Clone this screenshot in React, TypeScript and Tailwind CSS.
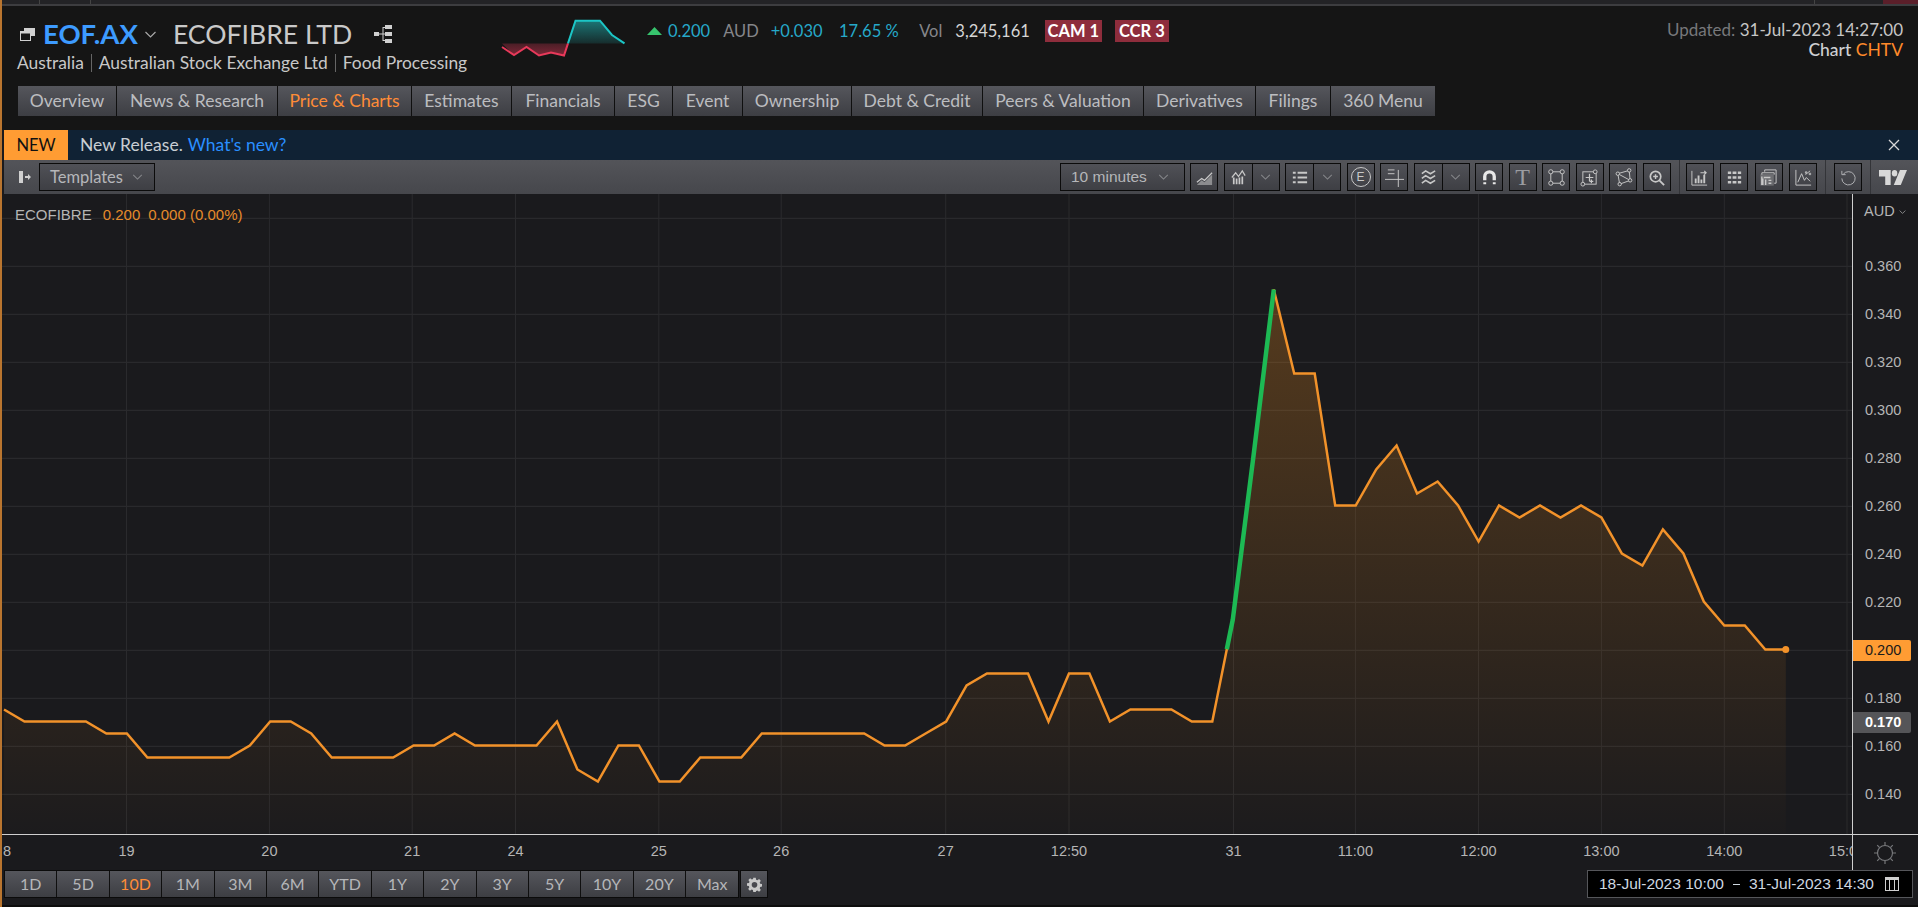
import React from "react";

const FONT = "font-['Lato','Open_Sans',sans-serif]";

const prices = [
  0.175, 0.17, 0.17, 0.17, 0.17, 0.165, 0.165, 0.155, 0.155, 0.155, 0.155, 0.155, 0.16, 0.17, 0.17, 0.165, 0.155,
  0.155, 0.155, 0.155, 0.16, 0.16, 0.165, 0.16, 0.16, 0.16, 0.16, 0.17, 0.15, 0.145, 0.16, 0.16, 0.145, 0.145, 0.155,
  0.155, 0.155, 0.165, 0.165, 0.165, 0.165, 0.165, 0.165, 0.16, 0.16, 0.165, 0.17, 0.185, 0.19, 0.19, 0.19, 0.17, 0.19,
  0.19, 0.17, 0.175, 0.175, 0.175, 0.17, 0.17, 0.2125, 0.28, 0.35, 0.315, 0.315, 0.26, 0.26, 0.275, 0.285, 0.265, 0.27,
  0.26, 0.245, 0.26, 0.255, 0.26, 0.255, 0.26, 0.255, 0.24, 0.235, 0.25, 0.24, 0.22, 0.21, 0.21, 0.2, 0.2,
];

const px = (i: number) => 4 + 20.48 * i;
const py = (p: number) => 650.3 - (p - 0.2) * 2400;
const pts = prices.map((p, i) => `${px(i).toFixed(1)},${py(p).toFixed(1)}`).join(" ");
const greenPts = `1226.8,650 ${prices.slice(60, 63).map((p, i) => `${px(60 + i).toFixed(1)},${py(p).toFixed(1)}`).join(" ")}`;

const gridY = [0.14, 0.16, 0.18, 0.2, 0.22, 0.24, 0.26, 0.28, 0.3, 0.32, 0.34, 0.36, 0.38];
const gridX = [126.5, 269.4, 412.2, 515.5, 658.8, 781.2, 945.7, 1069, 1233.5, 1355.4, 1478.5, 1601.4, 1724.3, 1847];
const timeLabels: Array<[string, number]> = [
  ["8", 7],
  ["19", 126.5],
  ["20", 269.4],
  ["21", 412.2],
  ["24", 515.5],
  ["25", 658.8],
  ["26", 781.2],
  ["27", 945.7],
  ["12:50", 1069],
  ["31", 1233.5],
  ["11:00", 1355.4],
  ["12:00", 1478.5],
  ["13:00", 1601.4],
  ["14:00", 1724.3],
  ["15:00", 1847],
];
const axisLabels = ["0.360", "0.340", "0.320", "0.300", "0.280", "0.260", "0.240", "0.220", "0.180", "0.160", "0.140"];

const tabs = [
  { name: "Overview", w: "w-[99px]" },
  { name: "News & Research", w: "w-[161px]" },
  { name: "Price & Charts", w: "w-[134px]", on: true },
  { name: "Estimates", w: "w-[100px]" },
  { name: "Financials", w: "w-[103px]" },
  { name: "ESG", w: "w-[58px]" },
  { name: "Event", w: "w-[70px]" },
  { name: "Ownership", w: "w-[109px]" },
  { name: "Debt & Credit", w: "w-[131px]" },
  { name: "Peers & Valuation", w: "w-[161px]" },
  { name: "Derivatives", w: "w-[112px]" },
  { name: "Filings", w: "w-[75px]" },
  { name: "360 Menu", w: "w-[104px]" },
];

const ranges = ["1D", "5D", "10D", "1M", "3M", "6M", "YTD", "1Y", "2Y", "3Y", "5Y", "10Y", "20Y", "Max"];

const Chevron: React.FC<{ className?: string }> = ({ className }) => (
  <svg viewBox="0 0 12 7" className={className} fill="none" stroke="currentColor" strokeWidth="1.2">
    <polyline points="1,1 6,6 11,1" />
  </svg>
);

const Btn: React.FC<{ children: React.ReactNode }> = ({ children }) => (
  <div className="flex h-[28px] w-[28px] items-center justify-center border border-[#0b0b0b] bg-gradient-to-b from-[#505157] to-[#3e3f44] text-[#c8c8c8]">
    {children}
  </div>
);

const DoubleBtn: React.FC<{ children: React.ReactNode }> = ({ children }) => (
  <div className="flex h-[28px] w-[56px] border border-[#0b0b0b] bg-gradient-to-b from-[#505157] to-[#3e3f44] text-[#c8c8c8]">
    <div className="flex w-[28px] items-center justify-center border-r border-[#0b0b0b]">{children}</div>
    <div className="flex flex-1 items-center justify-center text-[#85868a]">
      <Chevron className="h-[6px] w-[11px]" />
    </div>
  </div>
);

const Ico: React.FC<{ children: React.ReactNode }> = ({ children }) => (
  <svg viewBox="0 0 20 20" className="h-[19px] w-[19px]" fill="none" stroke="currentColor" strokeWidth="1">
    {children}
  </svg>
);

const Tab: React.FC<{ name: string; w: string; on?: boolean }> = ({ name, w, on }) => (
  <div
    className={`flex h-[30px] items-center justify-center border-r border-[#0f0f0f] bg-gradient-to-b from-[#55565c] to-[#3d3e43] text-[17.500px] last:border-r-0 ${w} ${
      on ? "text-[#ff8c37]" : "text-[#bcbdc0]"
    }`}
  >
    {name}
  </div>
);

const App: React.FC = () => {
  return (
    <div className={`flex h-[907px] w-[1918px] flex-col overflow-hidden border-l-2 border-[#b9752f] bg-[#1a1a1d] ${FONT}`}>
      <div className="flex h-[4px] justify-between bg-[#232326]">
        <div className="ml-[37px] h-full w-[52px] border-x border-[#444]" />
        <div className="flex h-full w-[104px] justify-end border-l border-[#444]">
          <div className="h-full w-[35px] bg-[#5b1f2a]" />
        </div>
      </div>
      <div className="h-[2px] bg-[#3d3d40]" />

      {/* header */}
      <div className="flex h-[124px] flex-col bg-[#151515]">
        <div className="flex h-[80px] justify-between">
          <div className="flex flex-col">
            <div className="mt-[9px] flex h-[38px] items-start">
              <div className="flex h-[38px] w-[499px] items-center pl-[18px]">
                <svg viewBox="0 0 15 13" className="h-[13px] w-[15px]">
                  <rect x="4" y="0" width="11" height="8" fill="#d0d0d0" />
                  <rect x="0.5" y="3.5" width="10" height="9" fill="#151515" stroke="#d0d0d0" />
                  <rect x="0" y="3" width="11" height="2.5" fill="#d0d0d0" />
                </svg>
                <span className="ml-[8px] text-[27.500px] font-bold leading-none text-[#3d9bff]">EOF.AX</span>
                <Chevron className="ml-[6px] h-[7px] w-[13px] text-[#a8a8a8]" />
                <span className="ml-[16px] text-[26.600px] leading-none text-[#c9c9c9]">ECOFIBRE LTD</span>
                <svg viewBox="0 0 18 18" className="ml-[22px] h-[18px] w-[18px]" fill="#d0d0d0">
                  <rect x="0" y="7" width="5" height="4" />
                  <rect x="11" y="0" width="7" height="4" />
                  <rect x="11" y="7" width="7" height="4" />
                  <rect x="11" y="14" width="7" height="4" />
                  <path d="M5 8.5h3.5V2H11v1H9.5v5.5H11v1H9.5V15H11v1H8.500V9.500H5z" />
                </svg>
              </div>
              <svg viewBox="501 15 124 44" className="h-[44px] w-[124px] overflow-visible">
                <defs>
                  <linearGradient id="teal" x1="0" y1="0" x2="0" y2="1">
                    <stop offset="0" stopColor="#1fb5b5" stopOpacity="0.6" />
                    <stop offset="1" stopColor="#1fb5b5" stopOpacity="0.15" />
                  </linearGradient>
                  <linearGradient id="red" x1="0" y1="0" x2="0" y2="1">
                    <stop offset="0" stopColor="#e8395a" stopOpacity="0.25" />
                    <stop offset="1" stopColor="#e8395a" stopOpacity="0.5" />
                  </linearGradient>
                </defs>
                <polygon points="502,43.400 514,55 526.500,47 539,55.500 551,52.500 564,55.500 568,43.400" fill="url(#red)" />
                <polygon points="568,43.400 575.500,20.700 600,20.700 612,35 624.500,43.400" fill="url(#teal)" />
                <polyline points="502,47 514,55 526.500,47 539,55.500 551,52.500 564,55.500 568,43.400" fill="none" stroke="#e8395a" strokeWidth="2" />
                <polyline points="568,43.400 575.500,20.700 600,20.700 612,35 624.500,43.400" fill="none" stroke="#1cc6c6" strokeWidth="2" />
              </svg>
              <div className="ml-[22px] flex h-[32px] items-center text-[16.500px] leading-none">
                <svg viewBox="0 0 15 8" className="h-[8px] w-[15px]" fill="#37c46d">
                  <polygon points="7.500,0 15,8 0,8" />
                </svg>
                <span className="ml-[6px] text-[#26a9c9]">0.200</span>
                <span className="ml-[13px] text-[#85868a]">AUD</span>
                <span className="ml-[12px] text-[#26a9c9]">+0.030</span>
                <span className="ml-[16.500px] text-[#26a9c9]">17.65 %</span>
                <span className="ml-[20.500px] text-[#85868a]">Vol</span>
                <span className="ml-[13px] text-[#d6d6d6]">3,245,161</span>
                <span className="ml-[15px] flex h-[22px] w-[57px] items-center justify-center bg-[#8e2d3c] font-bold text-white">CAM 1</span>
                <span className="ml-[13px] flex h-[22px] w-[54px] items-center justify-center bg-[#8e2d3c] font-bold text-white">CCR 3</span>
              </div>
            </div>
            <div className="flex items-center pl-[15px] text-[17.400px] leading-[20px] text-[#c8c8c8]">
              <span>Australia</span>
              <span className="mx-[7px] h-[18px] w-px bg-[#666]" />
              <span>Australian Stock Exchange Ltd</span>
              <span className="mx-[7px] h-[18px] w-px bg-[#666]" />
              <span>Food Processing</span>
            </div>
          </div>
          <div className="flex flex-col items-end pr-[15px] pt-[14px] leading-[20px]">
            <div className="text-[17px]">
              <span className="text-[#77787b]">Updated: </span>
              <span className="text-[#c6c6c6]">31-Jul-2023 14:27:00</span>
            </div>
            <div className="text-[17.500px]">
              <span className="font-medium text-[#cfd0d2]">Chart </span>
              <span className="text-[#ff8a2a]">CHTV</span>
            </div>
          </div>
        </div>
        <div className="ml-[16px] flex h-[30px] self-start border-y-0">
          {tabs.map((t) => (
            <Tab key={t.name} name={t.name} w={t.w} on={t.on} />
          ))}
        </div>
      </div>

      {/* release notice */}
      <div className="ml-[2px] flex h-[30px] items-center bg-[#102234] text-[17.500px]">
        <div className="flex h-full w-[64px] items-center justify-center bg-[#ff9c33] text-[16.500px] text-[#111]">NEW</div>
        <span className="ml-[12px] text-[#c9ced3]">New Release.</span>
        <span className="ml-[5px] text-[#2a8fff]">What's new?</span>
        <svg viewBox="0 0 12 12" className="ml-auto mr-[18px] h-[12px] w-[12px]" stroke="#d8d8d8" strokeWidth="1.300">
          <path d="M1 1l10 10M11 1L1 11" />
        </svg>
      </div>

      {/* toolbar */}
      <div className="ml-[2px] flex h-[34px] items-center bg-gradient-to-b from-[#535459] to-[#46474c]">
        <svg viewBox="0 0 12 12" className="ml-[15px] h-[12px] w-[12px]" fill="#d0d0d0">
          <rect x="0" y="0" width="4" height="12" />
          <path d="M6 5h3V3l3 3-3 3V7H6z" />
        </svg>
        <div className="ml-[8px] flex h-[28px] w-[116px] items-center border border-[#0b0b0b] bg-gradient-to-b from-[#505157] to-[#3e3f44] pl-[10px] text-[16.500px] text-[#b5b6b9]">
          Templates
          <Chevron className="ml-[9px] h-[6px] w-[11px] text-[#85868a]" />
        </div>
        <div className="ml-auto flex h-[28px] w-[125px] items-center border border-[#0b0b0b] bg-gradient-to-b from-[#505157] to-[#3e3f44] pl-[10px] font-['Liberation_Sans',sans-serif] text-[15.500px] text-[#b5b6b9]">
          10 minutes
          <Chevron className="ml-[11px] h-[6px] w-[11px] text-[#85868a]" />
        </div>
        <div className="ml-[5px] flex items-center gap-[5.500px]">
          <Btn>
            <Ico>
              <polyline points="2,15 7,11 10,13 18,5" strokeWidth="1.300" />
              <polygon points="2,18 7,13 10,15 18,7 18,18" fill="currentColor" stroke="none" opacity="0.55" />
            </Ico>
          </Btn>
          <DoubleBtn>
            <Ico>
              <polyline points="3,10 7,5 10,9 14,3 17,8" strokeWidth="1.300" />
              <path d="M5 10v7M8 11v6M11 10v7M14 9v8" strokeWidth="1.800" />
            </Ico>
          </DoubleBtn>
          <DoubleBtn>
            <Ico>
              <path d="M3 5h3M8 5h10M3 10h3M8 10h10M3 15h3M8 15h10" strokeWidth="2" />
            </Ico>
          </DoubleBtn>
          <Btn>
            <div className="flex h-[20px] w-[20px] items-center justify-center rounded-full border border-[#c8c8c8] font-['Liberation_Sans',sans-serif] text-[12px] leading-none">
              E
            </div>
          </Btn>
          <Btn>
            <Ico>
              <path d="M3 2h7M3 6h7M0 12h20M14 2v18" />
            </Ico>
          </Btn>
          <DoubleBtn>
            <Ico>
              <path d="M3 6l4-3 5 3 5-3M3 11l4-3 5 3 5-3M3 16l4-3 5 3 5-3" strokeWidth="1.700" />
            </Ico>
          </DoubleBtn>
          <Btn>
            <Ico>
              <path d="M5 13V9a5 5 0 0 1 10 0v4" strokeWidth="3.500" stroke="#e8e8e8" />
              <path d="M3.500 16h3M13.500 16h3" strokeWidth="2" stroke="#e8e8e8" />
            </Ico>
          </Btn>
          <Btn>
            <span className="font-['Liberation_Serif',serif] text-[24px] leading-none text-[#9c9da1]">T</span>
          </Btn>
          <Btn>
            <Ico>
              <rect x="4" y="4" width="12" height="12" />
              <circle cx="4" cy="4" r="2.200" fill="#46474c" />
              <circle cx="16" cy="4" r="2.200" fill="#46474c" />
              <circle cx="4" cy="16" r="2.200" fill="#46474c" />
              <circle cx="16" cy="16" r="2.200" fill="#46474c" />
            </Ico>
          </Btn>
          <Btn>
            <Ico>
              <rect x="3" y="4" width="14" height="13" />
              <path d="M10 6v8M6 10h8M12 12v4M10 14h4" strokeWidth="1.300" />
              <circle cx="16" cy="4" r="2" fill="#46474c" />
              <circle cx="3" cy="17" r="2" fill="#46474c" />
            </Ico>
          </Btn>
          <Btn>
            <Ico>
              <polygon points="4,6 16,2.500 17,13 6,17" />
              <path d="M4 6L17 13" />
              <circle cx="4" cy="6" r="1.800" fill="#46474c" />
              <circle cx="16" cy="2.500" r="1.800" fill="#46474c" />
              <circle cx="17" cy="13" r="1.800" fill="#46474c" />
              <circle cx="6" cy="17" r="1.800" fill="#46474c" />
            </Ico>
          </Btn>
          <Btn>
            <Ico>
              <circle cx="9" cy="9" r="5.500" strokeWidth="1.800" />
              <path d="M13 13l5 5" strokeWidth="2" />
              <path d="M9 6.500v5M6.500 9h5" strokeWidth="1.500" />
            </Ico>
          </Btn>
        </div>
        <div className="ml-[8px] h-[34px] w-px bg-[#333438]" />
        <div className="ml-[6px] flex items-center gap-[6.500px]">
          <Btn>
            <Ico>
              <path d="M2 3v15h16" />
              <path d="M6 16v-5M9 16V8M12 16v-4M15 16V7" strokeWidth="2" />
              <path d="M11 5h6M15 3l2 2-2 2" strokeWidth="1.200" />
            </Ico>
          </Btn>
          <Btn>
            <Ico>
              <path d="M3 5h3.500M8 5h4M13.500 5H17M3 10h3.500M8 10h4M13.500 10H17M3 15h3.500M8 15h4M13.500 15H17" strokeWidth="2.500" />
            </Ico>
          </Btn>
          <Btn>
            <Ico>
              <path d="M6 4V2h12v14h-2" />
              <path d="M3 7V5h13v2" />
              <rect x="2" y="7" width="13" height="11" fill="currentColor" opacity="0.3" />
              <path d="M5 10h7M10 13h3M10 16h3" strokeWidth="1.500" />
              <path d="M3 9v9M4 11v7M7 12v6" strokeWidth="1.500" />
            </Ico>
          </Btn>
          <Btn>
            <Ico>
              <path d="M2 2v16h16" />
              <polyline points="4,15 8,6 11,13 13,10 17,14" />
              <path d="M12 7l5-4M12 4h1.500v1.500H12zM16 5.500h1.500V7H16z" strokeWidth="0.900" />
            </Ico>
          </Btn>
        </div>
        <div className="ml-[8px] h-[34px] w-px bg-[#333438]" />
        <div className="ml-[8px]">
          <Btn>
            <Ico>
              <path d="M4.500 6.500A7 7 0 1 1 3 11" stroke="#b4b5b8" />
              <path d="M3 3v4h4" stroke="#b4b5b8" />
            </Ico>
          </Btn>
        </div>
        <div className="ml-[8px] h-[34px] w-px bg-[#333438]" />
        <svg viewBox="0 2 36 16" preserveAspectRatio="none" className="ml-[8px] mr-[11px] h-[15px] w-[28px]" fill="#d8d8d8">
          <path d="M0 2h15v16H8V9H0z" />
          <circle cx="20" cy="5.500" r="3.500" />
          <polygon points="36,2 28,18 19,18 27,2" />
        </svg>
      </div>

      {/* chart */}
      <div className="flex h-[640px] text-[#b5b5b5]">
        <div className="relative w-[1850px]">
          <svg viewBox="2 194 1850 640" className="block h-[640px] w-[1850px]">
            <defs>
              <linearGradient id="area" gradientUnits="userSpaceOnUse" x1="0" y1="290" x2="0" y2="834">
                <stop offset="0" stopColor="#f7931e" stopOpacity="0.27" />
                <stop offset="1" stopColor="#f7931e" stopOpacity="0.01" />
              </linearGradient>
            </defs>
            {gridY.map((p) => (
              <line key={p} x1="2" x2="1852" y1={py(p)} y2={py(p)} stroke="#2e2e31" />
            ))}
            {gridX.map((x) => (
              <line key={x} x1={x} x2={x} y1="194" y2="834" stroke="#2a2a2d" />
            ))}
            <g transform="translate(0,-0.8)">
              <polygon points={`4,834 ${pts} ${px(87)},834`} fill="url(#area)" />
              <polyline points={pts} fill="none" stroke="#f2922a" strokeWidth="2.500" strokeLinejoin="miter" />
              <polyline points={greenPts} fill="none" stroke="#1db954" strokeWidth="4.500" strokeLinejoin="round" />
              <circle cx={px(87)} cy="650.300" r="3.500" fill="#f2922a" />
            </g>
          </svg>
          <div className="absolute left-[13px] top-[12px] font-['Liberation_Sans',sans-serif] text-[15px] leading-[18px] text-[#e58b2b]">
            <span className="text-[#b5b5b5]">ECOFIBRE</span>
            <span className="ml-[11px]">0.200</span>
            <span className="ml-[8px]">0.000 (0.00%)</span>
          </div>
        </div>
        <div className="relative flex-1 border-l border-[#cfcfcf] font-['Liberation_Sans',sans-serif] text-[14.500px] leading-[21px]">
          <div className="absolute left-[11px] top-[7px] flex items-center gap-[4px]">
            AUD
            <Chevron className="h-[4px] w-[7px]" />
          </div>
          {axisLabels.map((l) => (
            <div key={l} className="absolute left-[12px]" style={{ top: py(parseFloat(l)) - 194 - 10.5 }}>
              {l}
            </div>
          ))}
          <div className="absolute left-0 top-[446px] h-[21px] w-[58px] rounded-r-[2px] bg-[#ff9c33] pl-[12px] text-[#1a1a1a]">0.200</div>
          <div className="absolute left-0 top-[518px] h-[21px] w-[58px] rounded-r-[2px] bg-[#555558] pl-[12px] font-bold text-white">0.170</div>
        </div>
      </div>

      {/* time axis */}
      <div className="flex h-[36px] border-t border-[#cfcfcf] font-['Liberation_Sans',sans-serif] text-[14.500px] text-[#b5b5b5]">
        <div className="relative h-full w-[1850px] overflow-hidden">
          {timeLabels.map(([t, x]) => (
            <div key={t} className="absolute top-[6px] -translate-x-1/2 leading-[21px]" style={{ left: x - 2 }}>
              {t}
            </div>
          ))}
        </div>
        <div className="flex flex-1 items-center justify-center border-l border-[#cfcfcf] pr-[2px] text-[#77787b]">
          <svg viewBox="0 0 22 22" className="h-[22px] w-[22px]" fill="none" stroke="currentColor" strokeWidth="1.200">
            <circle cx="11" cy="11" r="7.500" />
            <path d="M11 0v3M11 19v3M0 11h3M19 11h3M3.200 3.200l2.200 2.200M16.600 16.600l2.200 2.200M3.200 18.800l2.200-2.200M16.600 5.400l2.200-2.200" />
          </svg>
        </div>
      </div>

      {/* range row */}
      <div className="flex h-[37px] items-start border-b-2 border-[#0d0d0d] pl-[2px]">
        <div className="flex h-[28px] border border-[#0b0b0b]">
          {ranges.map((r) => (
            <div
              key={r}
              className={`flex h-full w-[52.400px] items-center justify-center border-r border-[#0f0f0f] bg-gradient-to-b from-[#55565c] to-[#3d3e43] text-[16px] last:border-r-0 ${
                r === "10D" ? "text-[#ff8c37]" : "text-[#b5b6b9]"
              }`}
            >
              {r}
            </div>
          ))}
        </div>
        <div className="ml-px flex h-[28px] w-[28px] items-center justify-center border border-[#0b0b0b] bg-gradient-to-b from-[#55565c] to-[#3d3e43]">
          <svg viewBox="0 0 24 24" className="h-[15px] w-[15px]" fill="#c8c8c8">
            <path
              fillRule="evenodd"
              d="M10 1h4l.6 3.200 2 .8 2.700-1.800 2.800 2.800-1.800 2.700.8 2 3.200.6v4l-3.200.6-.8 2 1.800 2.700-2.800 2.800-2.700-1.800-2 .8L14 24h-4l-.6-3.200-2-.8-2.700 1.800-2.800-2.800 1.800-2.700-.8-2L0 14v-4l3.200-.6.8-2L2.200 4.700 5 2l2.700 1.800 2-.8zM12 8a4.500 4.500 0 1 0 0 9 4.500 4.500 0 0 0 0-9z"
            />
          </svg>
        </div>
        <div className="ml-auto mr-[5px] flex h-[28px] w-[326px] items-center border border-[#55565a] bg-black pl-[11px] font-['Liberation_Sans',sans-serif] text-[15.500px] text-[#cfd8e0]">
          <span>18-Jul-2023 10:00</span>
          <span className="ml-[9px] h-px w-[7px] bg-[#cfd8e0]" />
          <span className="ml-[9px]">31-Jul-2023 14:30</span>
          <svg viewBox="0 0 14 14" className="ml-[11px] h-[14px] w-[14px]" fill="#cfcfcf">
            <path fillRule="evenodd" d="M0 0h14v14H0zM1 3v10h3V3zm4 0v10h4V3zm5 0v10h3V3z" />
          </svg>
        </div>
      </div>
    </div>
  );
};

export default App;
